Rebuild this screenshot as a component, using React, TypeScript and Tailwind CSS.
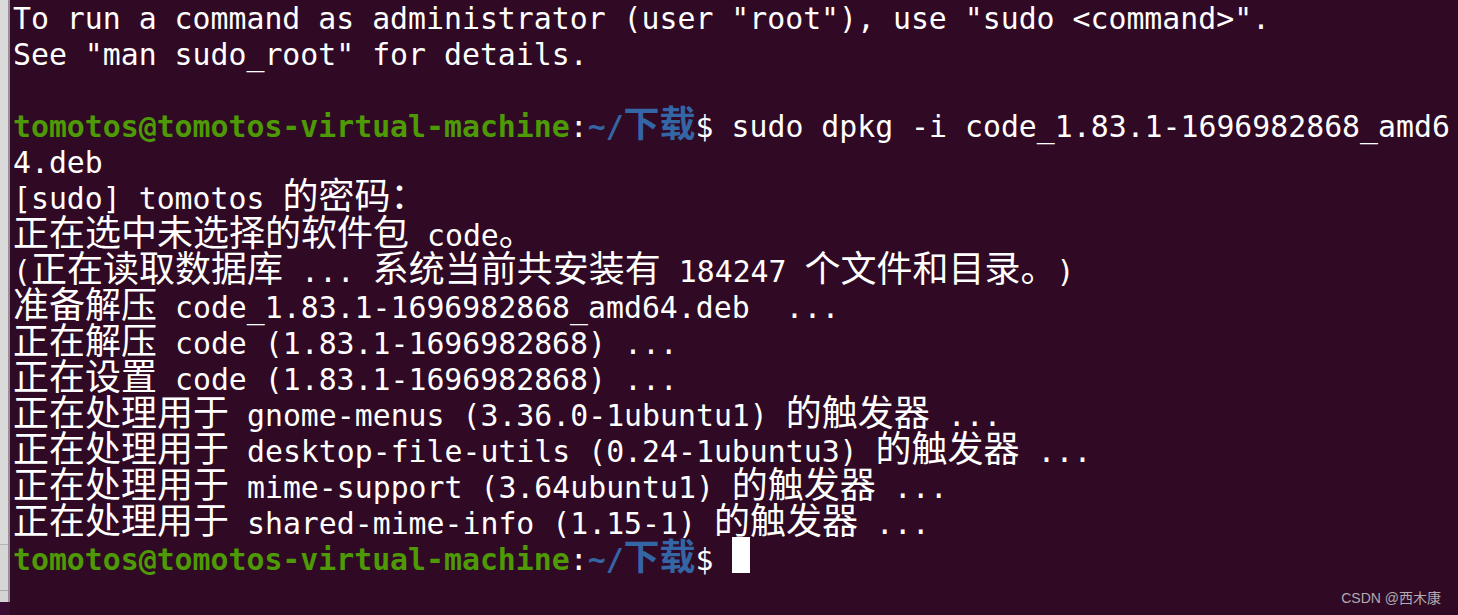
import React from "react";

const CJK_RE = /([\u3000-\u303f\u4e00-\u9fff\uff00-\uffef]+)/;

function T({ text, className = "" }: { text: string; className?: string }) {
  const parts = text.split(CJK_RE).filter((p) => p.length > 0);
  return (
    <span className={className}>
      {parts.map((p, i) =>
        CJK_RE.test(p) ? (
          <span
            key={i}
            className="font-['Noto_Sans_CJK_SC',sans-serif] text-[36px] leading-[20px] [text-spacing-trim:space-all]"
          >
            {p}
          </span>
        ) : (
          <span key={i}>{p}</span>
        )
      )}
    </span>
  );
}

function Prompt({ rest }: { rest?: string }) {
  return (
    <>
      <T text="tomotos@tomotos-virtual-machine" className="font-bold text-[#4e9a06]" />
      <T text=":" />
      <T text="~/下载" className="font-bold text-[#3465a4]" />
      <T text={"$ " + (rest ?? "")} />
    </>
  );
}

const lines: string[] = [
  "To run a command as administrator (user \"root\"), use \"sudo <command>\".",
  "See \"man sudo_root\" for details.",
  "",
  "__PROMPT1__",
  "4.deb",
  "[sudo] tomotos 的密码：",
  "正在选中未选择的软件包 code。",
  "(正在读取数据库 ... 系统当前共安装有 184247 个文件和目录。)",
  "准备解压 code_1.83.1-1696982868_amd64.deb  ...",
  "正在解压 code (1.83.1-1696982868) ...",
  "正在设置 code (1.83.1-1696982868) ...",
  "正在处理用于 gnome-menus (3.36.0-1ubuntu1) 的触发器 ...",
  "正在处理用于 desktop-file-utils (0.24-1ubuntu3) 的触发器 ...",
  "正在处理用于 mime-support (3.64ubuntu1) 的触发器 ...",
  "正在处理用于 shared-mime-info (1.15-1) 的触发器 ...",
  "__PROMPT2__",
];

export default function App() {
  return (
    <div className="relative w-[1458px] h-[615px] flex overflow-hidden bg-[#300a24] [text-spacing-trim:space-all]">
      {/* left window edge */}
      <div className="w-[10px] shrink-0 flex flex-col">
        <div className="flex-1 flex flex-row">
          <div className="w-[8px] flex flex-col">
            <div className="flex-1 bg-[#dadada]" />
            <div className="h-[1px] bg-[#b5b5b5]" />
            <div className="h-[45px] bg-[#d6d6d6]" />
            <div className="h-[1px] bg-[#a8a8a8]" />
            <div className="h-[11px] bg-[#d4d4d4]" />
          </div>
          <div className="w-[2px] bg-[#9a8f98]" />
        </div>
        <div className="h-[13px] bg-[#3a0c33]" />
      </div>

      {/* terminal */}
      <div className="flex-1 pl-[3px] pt-[1px] text-white font-['DejaVu_Sans_Mono','Noto_Sans_CJK_SC',monospace] text-[29.83px]">
        {lines.map((l, i) => (
          <div key={i} className="h-[36.1px] leading-[36.1px] whitespace-pre">
            {l === "__PROMPT1__" ? (
              <Prompt rest="sudo dpkg -i code_1.83.1-1696982868_amd6" />
            ) : l === "__PROMPT2__" ? (
              <>
                <Prompt />
                <span className="inline-block w-[18px] h-[36px] -mt-[8px] align-[-2.5px] bg-white" />
              </>
            ) : (
              <T text={l} />
            )}
          </div>
        ))}
      </div>

      {/* watermark */}
      <div className="absolute right-[17px] bottom-[9px] text-[14px] leading-[16px] text-[#b3a9b1] font-['Liberation_Sans','Noto_Sans_CJK_SC',sans-serif]">
        CSDN @西木康
      </div>
    </div>
  );
}
